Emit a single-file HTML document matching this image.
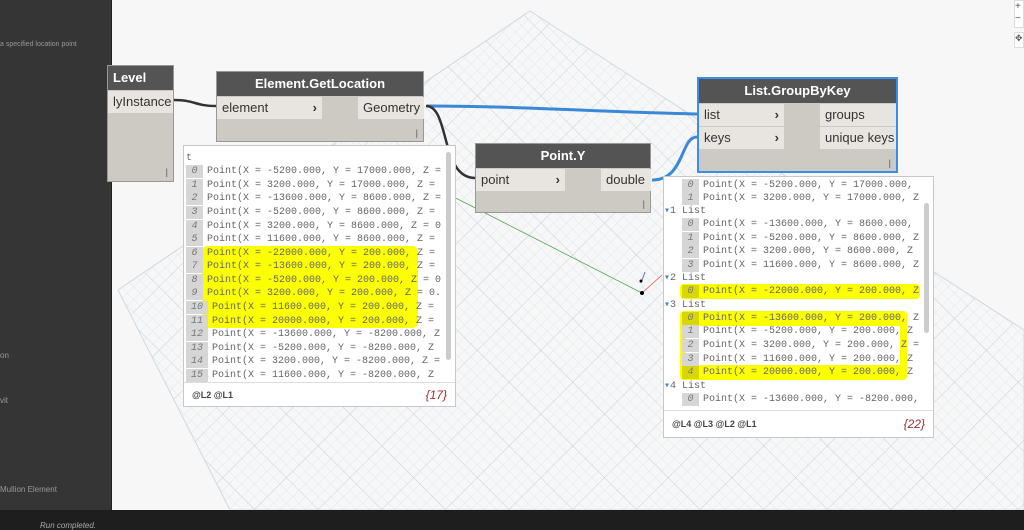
<!DOCTYPE html>
<html><head><meta charset="utf-8"><style>
*{margin:0;padding:0;box-sizing:border-box}
body{width:1024px;height:530px;overflow:hidden;background:#f7f7f7;font-family:"Liberation Sans",sans-serif;position:relative}
.abs{position:absolute}
.node{position:absolute;background:#cdc9c3;border:1px solid #9a9894}
.hdr{background:#545454;color:#fff;font-weight:bold;font-size:13px;text-align:center;height:24px;line-height:24px}
.port{position:absolute;background:#e8e5e0;font-size:13px;color:#333;height:22px;line-height:22px;padding-left:5px}
.chev{position:absolute;right:5px;top:0;font-weight:bold;font-size:13px}
.prev{position:absolute;background:#fff;border:1px solid #c8c8c8;font-family:"Liberation Mono",monospace;font-size:10px;color:#666}
.r{position:absolute;white-space:nowrap;height:13px;line-height:13px}
.i{display:inline-block;background:#d6d6d6;color:#777;font-style:italic;text-align:center;margin-right:4px}
.hl{position:absolute;background:#fbff00}
.foot{position:absolute;left:0;right:0;bottom:0;height:24px;border-top:1px solid #ddd;font-size:9px;line-height:24px;padding-left:8px;color:#444;font-family:"Liberation Sans",sans-serif;font-weight:bold}
.cnt{position:absolute;right:8px;top:0;color:#a03030;font-style:italic;font-weight:normal;font-size:12px}
</style></head><body>
<svg class="abs" style="left:0;top:0" width="1024" height="530">
<defs>
<pattern id="g" width="9" height="9" patternUnits="userSpaceOnUse" patternTransform="rotate(45)">
<path d="M0 0H9M0 0V9" stroke="#dfe8ef" stroke-width="1"/></pattern>
<pattern id="G" width="45" height="45" patternUnits="userSpaceOnUse" patternTransform="rotate(45)">
<path d="M0 0H45M0 0V45" stroke="#cbd5dd" stroke-width="1"/></pattern>
</defs>
<polygon points="530,11 1024,330 1024,510 230,510 118,290" fill="url(#g)"/>
<polygon points="530,11 1024,330 1024,510 230,510 118,290" fill="url(#G)" stroke="#d0d9e0"/>
<line x1="440" y1="190" x2="642" y2="293" stroke="#4aa84a" stroke-width="0.8"/>
<line x1="642" y1="293" x2="662" y2="275" stroke="#e05050" stroke-width="0.8"/>
<line x1="641" y1="283" x2="645" y2="272" stroke="#5050e0" stroke-width="0.8"/>
<circle cx="642" cy="293" r="2" fill="#000"/><circle cx="641" cy="281" r="1.5" fill="#000"/>
<path d="M427 106 C520 106 600 112 697 114" stroke="#3a88d8" stroke-width="3" fill="none"/>
<path d="M652 180 C685 180 680 137 697 137" stroke="#3a88d8" stroke-width="3" fill="none"/>
<path d="M174 100 C195 100 195 106 216 106" stroke="#333" stroke-width="2.5" fill="none"/>
<path d="M426 106 C450 106 440 178 475 178" stroke="#333" stroke-width="2.5" fill="none"/>
</svg>
<div class="abs" style="left:0;top:0;width:112px;height:510px;background:#353535;border-right:1px solid #222"></div>
<div class="abs" style="left:0;top:41px;font-size:7px;color:#999">a specified location point</div>
<div class="abs" style="left:0;top:351px;font-size:8px;color:#999">on</div>
<div class="abs" style="left:0;top:396px;font-size:8px;color:#999">vit</div>
<div class="abs" style="left:0;top:485px;font-size:8px;color:#999">Mullion Element</div>
<div class="abs" style="left:0;top:510px;width:1024px;height:20px;background:#1e1e1e"></div>
<div class="abs" style="left:40px;top:521px;font-size:8px;color:#aaa;font-style:italic">Run completed.</div>
<div class="abs" style="left:1014px;top:0;width:10px;height:28px;background:#fff;border:1px solid #ddd;font-size:10px;color:#555;line-height:12px">+<br>−</div>
<div class="abs" style="left:1014px;top:32px;width:10px;height:16px;background:#fff;border:1px solid #ddd;font-size:9px;color:#555">✥</div>

<div class="node" style="left:107px;top:65px;width:67px;height:117px"><div class="hdr" style="text-align:left;padding-left:5px">Level</div>
<div class="port" style="left:0;top:25px;width:65px;padding-left:5px">lyInstance</div><div class="abs" style="right:5px;bottom:4px;font-size:9px;color:#555">|</div></div>

<div class="node" style="left:216px;top:71px;width:208px;height:71px"><div class="hdr">Element.GetLocation</div>
<div class="port" style="left:0;top:25px;width:105px">element<span class="chev">›</span></div>
<div class="port" style="left:141px;top:25px;width:66px">Geometry</div><div class="abs" style="right:5px;bottom:3px;font-size:9px;color:#555">|</div></div>

<div class="node" style="left:475px;top:143px;width:176px;height:70px"><div class="hdr">Point.Y</div>
<div class="port" style="left:0;top:25px;width:89px">point<span class="chev">›</span></div>
<div class="port" style="left:125px;top:25px;width:50px">double</div><div class="abs" style="right:5px;bottom:3px;font-size:9px;color:#555">|</div></div>

<div class="node" style="left:697px;top:77px;width:201px;height:96px;border:2px solid #3a8ee6"><div class="hdr">List.GroupByKey</div>
<div class="port" style="left:0;top:25px;width:85px">list<span class="chev">›</span></div>
<div class="port" style="left:0;top:48px;width:85px">keys<span class="chev">›</span></div>
<div class="port" style="left:121px;top:25px;width:76px">groups</div>
<div class="port" style="left:121px;top:48px;width:76px">unique keys</div><div class="abs" style="right:5px;bottom:3px;font-size:9px;color:#555">|</div></div>

<div class="prev" style="left:183px;top:145px;width:273px;height:262px">
<div class="hl" style="left:18px;top:100px;width:216px;height:82px;border-radius:6px"></div>
<div class="abs" style="left:262px;top:6px;width:5px;height:208px;background:#ccc;border-radius:3px"></div>
<div class="r" style="left:2px;top:6px">t</div>
<div class="r" style="left:2px;top:19px"><span class="i" style="width:17px">0</span>Point(X = -5200.000, Y = 17000.000, Z =</div>
<div class="r" style="left:2px;top:33px"><span class="i" style="width:17px">1</span>Point(X = 3200.000, Y = 17000.000, Z =</div>
<div class="r" style="left:2px;top:46px"><span class="i" style="width:17px">2</span>Point(X = -13600.000, Y = 8600.000, Z =</div>
<div class="r" style="left:2px;top:60px"><span class="i" style="width:17px">3</span>Point(X = -5200.000, Y = 8600.000, Z =</div>
<div class="r" style="left:2px;top:74px"><span class="i" style="width:17px">4</span>Point(X = 3200.000, Y = 8600.000, Z = 0</div>
<div class="r" style="left:2px;top:87px"><span class="i" style="width:17px">5</span>Point(X = 11600.000, Y = 8600.000, Z =</div>
<div class="r" style="left:2px;top:101px"><span class="i" style="width:17px">6</span>Point(X = -22000.000, Y = 200.000, Z =</div>
<div class="r" style="left:2px;top:114px"><span class="i" style="width:17px">7</span>Point(X = -13600.000, Y = 200.000, Z =</div>
<div class="r" style="left:2px;top:128px"><span class="i" style="width:17px">8</span>Point(X = -5200.000, Y = 200.000, Z = 0</div>
<div class="r" style="left:2px;top:141px"><span class="i" style="width:17px">9</span>Point(X = 3200.000, Y = 200.000, Z = 0.</div>
<div class="r" style="left:2px;top:155px"><span class="i" style="width:22px">10</span>Point(X = 11600.000, Y = 200.000, Z =</div>
<div class="r" style="left:2px;top:169px"><span class="i" style="width:22px">11</span>Point(X = 20000.000, Y = 200.000, Z =</div>
<div class="r" style="left:2px;top:182px"><span class="i" style="width:22px">12</span>Point(X = -13600.000, Y = -8200.000, Z</div>
<div class="r" style="left:2px;top:196px"><span class="i" style="width:22px">13</span>Point(X = -5200.000, Y = -8200.000, Z</div>
<div class="r" style="left:2px;top:209px"><span class="i" style="width:22px">14</span>Point(X = 3200.000, Y = -8200.000, Z =</div>
<div class="r" style="left:2px;top:223px"><span class="i" style="width:22px">15</span>Point(X = 11600.000, Y = -8200.000, Z</div>
<div class="foot" style="background:#fff">@L2 @L1<span class="cnt">{17}</span></div>
</div>

<div class="prev" style="left:663px;top:176px;width:271px;height:262px">
<div class="hl" style="left:16px;top:107px;width:240px;height:15px;border-radius:4px"></div>
<div class="hl" style="left:16px;top:134px;width:227px;height:69px;border-radius:4px"></div>
<div class="abs" style="left:22px;top:149px;width:214px;height:39px;background:#fff"></div>
<div class="abs" style="left:260px;top:26px;width:5px;height:130px;background:#ccc;border-radius:3px"></div>
<div class="r" style="left:18px;top:2px"><span class="i" style="width:17px">0</span>Point(X = -5200.000, Y = 17000.000,</div>
<div class="r" style="left:18px;top:15px"><span class="i" style="width:17px">1</span>Point(X = 3200.000, Y = 17000.000, Z</div>
<div class="r" style="left:0;top:28px"><span style="color:#3a88d8">▾</span>1 List</div>
<div class="r" style="left:18px;top:41px"><span class="i" style="width:17px">0</span>Point(X = -13600.000, Y = 8600.000,</div>
<div class="r" style="left:18px;top:55px"><span class="i" style="width:17px">1</span>Point(X = -5200.000, Y = 8600.000, Z</div>
<div class="r" style="left:18px;top:68px"><span class="i" style="width:17px">2</span>Point(X = 3200.000, Y = 8600.000, Z</div>
<div class="r" style="left:18px;top:82px"><span class="i" style="width:17px">3</span>Point(X = 11600.000, Y = 8600.000, Z</div>
<div class="r" style="left:0;top:95px"><span style="color:#3a88d8">▾</span>2 List</div>
<div class="r" style="left:18px;top:108px"><span class="i" style="width:17px;background:#d8d800">0</span>Point(X = -22000.000, Y = 200.000, Z</div>
<div class="r" style="left:0;top:122px"><span style="color:#3a88d8">▾</span>3 List</div>
<div class="r" style="left:18px;top:135px"><span class="i" style="width:17px;background:#d8d800">0</span>Point(X = -13600.000, Y = 200.000, Z</div>
<div class="r" style="left:18px;top:148px"><span class="i" style="width:17px">1</span>Point(X = -5200.000, Y = 200.000, Z</div>
<div class="r" style="left:18px;top:162px"><span class="i" style="width:17px">2</span>Point(X = 3200.000, Y = 200.000, Z =</div>
<div class="r" style="left:18px;top:176px"><span class="i" style="width:17px">3</span>Point(X = 11600.000, Y = 200.000, Z</div>
<div class="r" style="left:18px;top:189px"><span class="i" style="width:17px;background:#d8d800">4</span>Point(X = 20000.000, Y = 200.000, Z</div>
<div class="r" style="left:0;top:203px"><span style="color:#3a88d8">▾</span>4 List</div>
<div class="r" style="left:18px;top:216px"><span class="i" style="width:17px">0</span>Point(X = -13600.000, Y = -8200.000,</div>
<div class="foot" style="background:#fff;height:27px;line-height:27px">@L4 @L3 @L2 @L1<span class="cnt">{22}</span></div>
</div>
</body></html>
